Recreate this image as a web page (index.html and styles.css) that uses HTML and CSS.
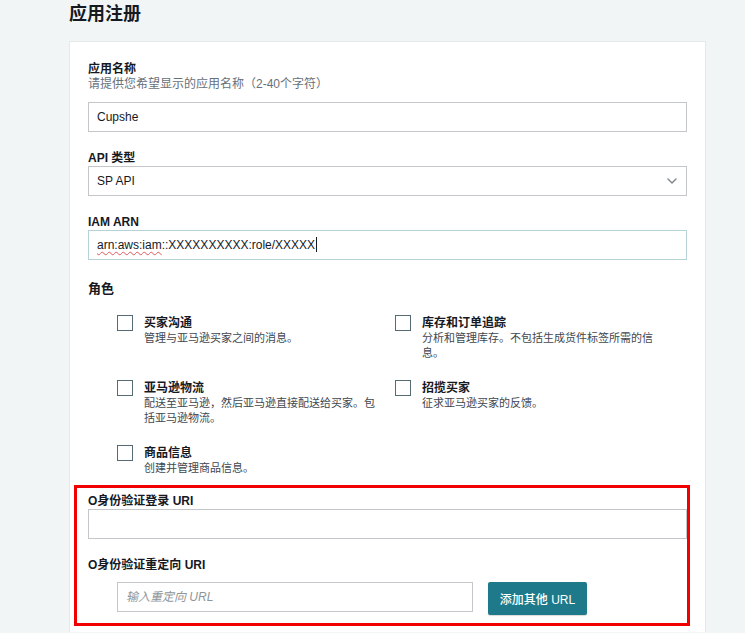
FILE: index.html
```html
<!DOCTYPE html>
<html lang="zh-CN">
<head>
<meta charset="utf-8">
<title>应用注册</title>
<link rel="stylesheet" href="styles.css">
</head>
<body>
<div class="page">
  <h1 class="page-title">应用注册</h1>
  <div class="card">
    <div class="field first">
      <div class="label">应用名称</div>
      <div class="hint">请提供您希望显示的应用名称（2-40个字符）</div>
      <input class="input name-input" type="text" value="Cupshe">
    </div>

    <div class="field">
      <div class="label">API 类型</div>
      <div class="select">
        <span>SP API</span>
        <svg class="chevron" width="10" height="6" viewBox="0 0 10 6"><path d="M1 1l4 4 4-4" fill="none" stroke="#7d868c" stroke-width="1.4" stroke-linecap="round" stroke-linejoin="round"/></svg>
      </div>
    </div>

    <div class="field">
      <div class="label">IAM ARN</div>
      <div class="input focused"><span class="spell">arn:aws:iam</span>::XXXXXXXXXX:role/XXXXX<span class="caret"></span></div>
    </div>

    <div class="field">
      <div class="label role-label">角色</div>
      <div class="roles">
        <label class="role">
          <span class="box"></span>
          <span class="role-text"><span class="role-title">买家沟通</span><span class="role-desc">管理与亚马逊买家之间的消息。</span></span>
        </label>
        <label class="role">
          <span class="box"></span>
          <span class="role-text"><span class="role-title">库存和订单追踪</span><span class="role-desc">分析和管理库存。不包括生成货件标签所需的信息。</span></span>
        </label>
        <label class="role">
          <span class="box"></span>
          <span class="role-text"><span class="role-title">亚马逊物流</span><span class="role-desc">配送至亚马逊，然后亚马逊直接配送给买家。包括亚马逊物流。</span></span>
        </label>
        <label class="role">
          <span class="box"></span>
          <span class="role-text"><span class="role-title">招揽买家</span><span class="role-desc">征求亚马逊买家的反馈。</span></span>
        </label>
        <label class="role">
          <span class="box"></span>
          <span class="role-text"><span class="role-title">商品信息</span><span class="role-desc">创建并管理商品信息。</span></span>
        </label>
      </div>
    </div>

    <div class="oauth">
      <div class="label">O身份验证登录 URI</div>
      <input class="input" type="text" value="">
      <div class="label redirect-label">O身份验证重定向 URI</div>
      <div class="redirect-row">
        <input class="input redirect-input" type="text" placeholder="输入重定向 URL">
        <button class="btn" type="button">添加其他 URL</button>
      </div>
    </div>
  </div>
</div>
</body>
</html>
```
FILE: styles.css
```css
* { box-sizing: border-box; }
html, body { margin: 0; padding: 0; }
body {
  background: #f2f5f6;
  font-family: "Liberation Sans", "Noto Sans CJK SC", sans-serif;
  color: #16191f;
  font-size: 12px;
  height: 633px;
  overflow: hidden;
}
.page {
  padding: 2px 0 0 69px;
  width: 706px;
}
.page-title {
  margin: 0;
  font-size: 18px;
  line-height: 24px;
  font-weight: 700;
  color: #16191f;
}
.card {
  margin-top: 15px;
  background: #fff;
  border: 1px solid #e6e9ea;
  border-bottom: none;
  padding: 19px 18px 6px 18px;
}
.field { margin-top: 18px; }
.field.first { margin-top: 0; }
.label {
  font-weight: 700;
  font-size: 12px;
  line-height: 16px;
  color: #16191f;
}
.hint {
  color: #687078;
  font-size: 12px;
  line-height: 14px;
  margin-bottom: 11px;
}
.input {
  display: block;
  width: 100%;
  height: 30px;
  border: 1px solid #c3c7c9;
  border-radius: 0;
  background: #fff;
  padding: 0 8px;
  font-family: "Liberation Sans", "Noto Sans CJK SC", sans-serif;
  font-size: 12px;
  color: #16191f;
  line-height: 28px;
  outline: none;
  margin: 0;
}
.input::placeholder {
  color: #8d969b;
  font-style: italic;
}
.input.focused {
  border-color: #b5d3d7;
  white-space: nowrap;
}
.spell {
  text-decoration: underline wavy #e0575b;
  text-decoration-thickness: 1px;
  text-underline-offset: 2px;
}
.caret {
  display: inline-block;
  width: 1px;
  height: 15px;
  background: #16191f;
  vertical-align: -3px;
  margin-left: 1px;
}
.select {
  height: 30px;
  border: 1px solid #c3c7c9;
  display: flex;
  align-items: center;
  justify-content: space-between;
  padding: 0 8px;
  font-size: 12px;
}
.chevron { margin-right: 1px; }
.role-label {
  font-size: 13px;
  font-weight: 600;
  padding-top: 3px;
}
.roles {
  margin-top: 18px;
  padding-left: 29px;
  display: grid;
  grid-template-columns: 278px 278px;
  row-gap: 19px;
}
.role {
  display: flex;
  align-items: flex-start;
  gap: 11px;
}
.box {
  flex: none;
  width: 16px;
  height: 16px;
  border: 1px solid #556a72;
  background: #fff;
}
.role-text {
  display: flex;
  flex-direction: column;
  max-width: 236px;
}
.role-title {
  font-weight: 700;
  font-size: 12px;
  line-height: 16px;
}
.role-desc {
  font-size: 11px;
  line-height: 15px;
  color: #414750;
}
.oauth {
  margin: 9px -3px 0 -14px;
  border: 3px solid #f00000;
  padding: 5px 0 8px 11px;
}
.redirect-label { margin-top: 18px; }
.redirect-row {
  margin-top: 9px;
  padding-left: 29px;
  display: flex;
  align-items: flex-start;
  gap: 15px;
}
.redirect-input { width: 356px; }
.btn {
  height: 33px;
  width: 99px;
  border: none;
  border-radius: 2px;
  background: #1e7a8a;
  color: #fff;
  font-family: "Liberation Sans", "Noto Sans CJK SC", sans-serif;
  font-size: 12px;
  font-weight: 500;
  padding: 0;
  box-shadow: 0 1px 1px rgba(0,0,0,0.15);
}
```
